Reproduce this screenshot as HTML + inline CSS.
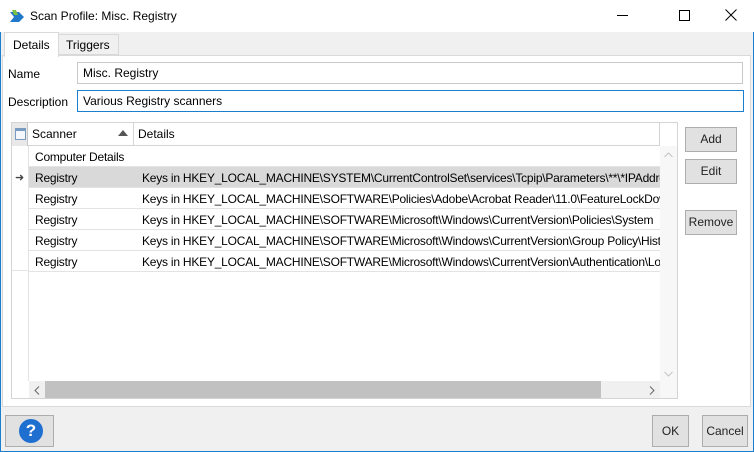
<!DOCTYPE html>
<html><head><style>
*{margin:0;padding:0;box-sizing:border-box}
body{width:754px;height:452px;overflow:hidden;background:#f0f0f0;font-family:"Liberation Sans",sans-serif;font-size:12px;color:#000;position:relative}
.a{position:absolute}
.btn{position:absolute;background:#e1e1e1;border:1px solid #adadad;text-align:center;color:#222;font-size:12px}
.row{position:absolute;left:13px;width:647px;height:21px;border-bottom:1px solid #e3e3e3;white-space:nowrap;overflow:hidden;letter-spacing:-0.22px}
.row span{position:absolute;top:4px}
</style></head><body>
<div class="a" style="left:0;top:0;width:754px;height:452px;border:1px solid #1a7fd0;border-top:none"></div>
<div class="a" style="left:0;top:0;width:754px;height:32px;background:#fff"></div>
<svg class="a" style="left:9px;top:8px" width="16" height="16" viewBox="0 0 16 16"><path d="M1 4 L10 4 L15 9 L10 14 L1 14 L5 9Z" fill="#1f78c8"/><path d="M3 2 L7 2 L9 7 L5 7Z" fill="#7cc242"/></svg>
<div class="a" style="left:30px;top:9px;font-size:12px">Scan Profile: Misc. Registry</div>
<div class="a" style="left:617px;top:15px;width:11px;height:1px;background:#000"></div>
<div class="a" style="left:679px;top:10px;width:11px;height:11px;border:1px solid #000"></div>
<svg class="a" style="left:725px;top:9px" width="12" height="12"><path d="M0.5 0.5L11.5 11.5M11.5 0.5L0.5 11.5" stroke="#000" stroke-width="1"/></svg>
<div class="a" style="left:2px;top:55px;width:749px;height:352px;background:#fff;border:1px solid #d9d9d9"></div>
<div class="a" style="left:58px;top:34px;width:61px;height:21px;border:1px solid #d9d9d9;background:#f0f0f0"></div>
<div class="a" style="left:66px;top:38px">Triggers</div>
<div class="a" style="left:4px;top:32px;width:55px;height:25px;border:1px solid #d9d9d9;border-bottom:none;background:#fff"></div>
<div class="a" style="left:13px;top:38px">Details</div>
<div class="a" style="left:8px;top:67px">Name</div>
<div class="a" style="left:77px;top:62px;width:666px;height:22px;border:1px solid #c9c9c9;background:#fff"><span style="position:absolute;left:5px;top:3px">Misc. Registry</span></div>
<div class="a" style="left:8px;top:95px">Description</div>
<div class="a" style="left:77px;top:90px;width:667px;height:22px;border:1px solid #1a7fd0;background:#fff"><span style="position:absolute;left:5px;top:3px">Various Registry scanners</span></div>
<div class="a" style="left:11px;top:122px;width:667px;height:277px;border:1px solid #d4d4d4;background:#fff"></div>
<div class="a" style="left:12px;top:123px;width:648px;height:23px;border-bottom:1px solid #d4d4d4"></div>
<div class="a" style="left:12px;top:123px;width:16px;height:23px;background:#e8e8e8;border-right:1px solid #c5c5c5"></div>
<div class="a" style="left:15px;top:128px;width:11px;height:12px;border:1px solid #7a9bc0;border-top:3px solid #7a9bc0;background:#f4f7fb"></div>
<div class="a" style="left:32px;top:127px">Scanner</div>
<svg class="a" style="left:118px;top:130px" width="10" height="6"><path d="M0 6L5 0L10 6Z" fill="#555"/></svg>
<div class="a" style="left:133px;top:123px;width:1px;height:23px;background:#d4d4d4"></div>
<div class="a" style="left:138px;top:127px">Details</div>
<div class="a" style="left:659px;top:123px;width:1px;height:23px;background:#d4d4d4"></div>
<div class="a" style="left:28px;top:146px;width:1px;height:235px;background:#e3e3e3"></div>
<div class="a" style="left:660px;top:146px;width:17px;height:252px;background:#f7f7f7"></div>
<svg class="a" style="left:664px;top:152px" width="9" height="6"><path d="M0.5 5L4.5 1L8.5 5" stroke="#c4c4c4" fill="none"/></svg>
<svg class="a" style="left:664px;top:371px" width="9" height="6"><path d="M0.5 1L4.5 5L8.5 1" stroke="#c4c4c4" fill="none"/></svg>
<div class="row" style="top:146px;left:29px;width:631px"><span style="left:6px">Computer Details</span></div>
<div class="row" style="top:167px;left:29px;width:631px;background:#d9d9d9"><span style="left:6px">Registry</span><span style="left:113px">Keys in HKEY_LOCAL_MACHINE\SYSTEM\CurrentControlSet\services\Tcpip\Parameters\**\*IPAddress</span></div>
<div class="a" style="left:15px;top:171px;font-size:11px;color:#444">➜</div>
<div class="row" style="top:188px;left:29px;width:631px"><span style="left:6px">Registry</span><span style="left:113px">Keys in HKEY_LOCAL_MACHINE\SOFTWARE\Policies\Adobe\Acrobat Reader\11.0\FeatureLockDown</span></div>
<div class="row" style="top:209px;left:29px;width:631px"><span style="left:6px">Registry</span><span style="left:113px">Keys in HKEY_LOCAL_MACHINE\SOFTWARE\Microsoft\Windows\CurrentVersion\Policies\System</span></div>
<div class="row" style="top:230px;left:29px;width:631px"><span style="left:6px">Registry</span><span style="left:113px">Keys in HKEY_LOCAL_MACHINE\SOFTWARE\Microsoft\Windows\CurrentVersion\Group Policy\History</span></div>
<div class="row" style="top:251px;left:29px;width:631px"><span style="left:6px">Registry</span><span style="left:113px">Keys in HKEY_LOCAL_MACHINE\SOFTWARE\Microsoft\Windows\CurrentVersion\Authentication\LogonUI</span></div>
<div class="a" style="left:12px;top:146px;width:16px;height:125px;border-bottom:1px solid #e3e3e3"></div>
<div class="a" style="left:29px;top:381px;width:631px;height:17px;background:#f0f0f0"></div>
<div class="a" style="left:45px;top:381px;width:556px;height:17px;background:#c1c1c1"></div>
<svg class="a" style="left:34px;top:386px" width="6" height="9"><path d="M5 0.5L1 4.5L5 8.5" stroke="#666" fill="none"/></svg>
<svg class="a" style="left:649px;top:386px" width="6" height="9"><path d="M1 0.5L5 4.5L1 8.5" stroke="#666" fill="none"/></svg>
<div class="btn" style="left:685px;top:127px;width:52px;height:25px;line-height:23px">Add</div>
<div class="btn" style="left:685px;top:159px;width:52px;height:25px;line-height:23px">Edit</div>
<div class="btn" style="left:685px;top:210px;width:52px;height:25px;line-height:23px">Remove</div>
<div class="btn" style="left:5px;top:415px;width:49px;height:32px"></div>
<div class="a" style="left:19px;top:419px;width:24px;height:24px;border-radius:50%;background:#1f6fd0;color:#fff;font-weight:bold;font-size:17px;text-align:center;line-height:24px">?</div>
<div class="btn" style="left:652px;top:415px;width:37px;height:32px;line-height:30px">OK</div>
<div class="btn" style="left:702px;top:415px;width:46px;height:32px;line-height:30px">Cancel</div>
</body></html>
